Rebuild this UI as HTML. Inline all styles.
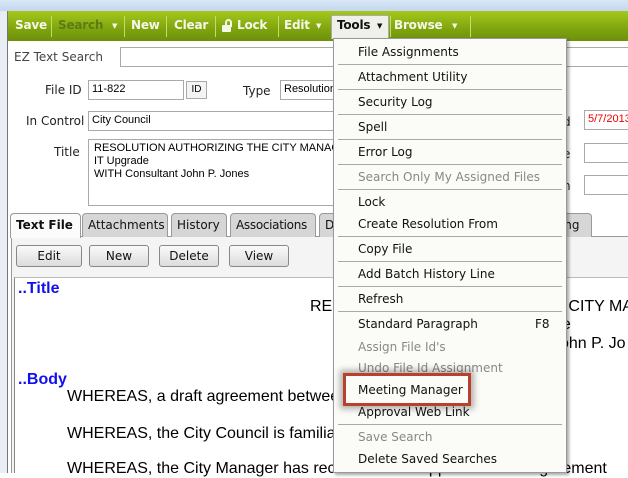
<!DOCTYPE html>
<html><head><meta charset="utf-8"><style>
*{margin:0;padding:0;box-sizing:border-box}
body{width:628px;height:473px;overflow:hidden;position:relative;background:#fff;font-family:"DejaVu Sans","Liberation Sans",sans-serif;}
.a{position:absolute;white-space:nowrap}
.tb{position:absolute;left:8px;top:11px;width:620px;height:30px;background:linear-gradient(#a5c81c,#7fa40f 60%,#6d900a);}
.tb span{position:absolute;top:7px;font-size:12px;font-weight:bold;color:#f4f8e8;letter-spacing:-0.2px;white-space:nowrap}
.tb .ar{font-size:7px;top:11px}
.sep{position:absolute;top:5px;width:1px;height:21px;background:#c4dc6a}
.lbl{font-size:12px;color:#222}
.in{position:absolute;border:1px solid #aaa;background:#fff;font-family:"Liberation Sans",sans-serif;font-size:11px;padding:2px 3px;color:#000;white-space:nowrap;overflow:hidden}
.tab{position:absolute;top:213px;height:24px;border:1px solid #999;border-bottom:none;border-radius:4px 4px 0 0;background:#d6d6d6;font-size:12px;padding:4px 5px;color:#111;white-space:nowrap;overflow:hidden}
.btn{position:absolute;top:245px;height:22px;border:1px solid #888;border-radius:3px;background:linear-gradient(#fafafa,#dcdcdc);font-size:12px;text-align:center;line-height:20px;color:#111}
.menu{position:absolute;left:333px;top:38px;width:234px;height:435px;background:#fbfbf7;border:1px solid #999;box-shadow:2px 2px 3px rgba(0,0,0,.35)}
.mi{position:absolute;left:24px;font-size:12px;color:#111;white-space:nowrap}
.dis{color:#888}
.ms{position:absolute;left:4px;width:224px;height:1px;background:#a8a8a8}
.doc{font-family:"Liberation Sans",sans-serif;font-size:16px;color:#000}
</style></head><body>
<div class="a" style="left:0;top:0;width:628px;height:11px;background:linear-gradient(#d9e7f5,#c3d7ee)"></div>
<div class="a" style="left:0;top:11px;width:8px;height:462px;background:#e9eef5;border-right:1px solid #777"></div>
<div class="tb">
<span style="left:7px">Save</span><div class="sep" style="left:43px"></div>
<span style="left:50px;color:#5e7a14">Search</span><span class="ar" style="left:104px">▼</span><div class="sep" style="left:116px"></div>
<span style="left:123px">New</span><div class="sep" style="left:158px"></div>
<span style="left:166px">Clear</span><div class="sep" style="left:207px"></div>
<div style="position:absolute;left:214px;top:14px;width:9px;height:7px;background:#f4f8e8;border-radius:1px"></div>
<div style="position:absolute;left:217px;top:8px;width:7px;height:8px;border:2px solid #f4f8e8;border-bottom:none;border-radius:4px 4px 0 0"></div>
<span style="left:229px">Lock</span><div class="sep" style="left:270px"></div>
<span style="left:276px">Edit</span><span class="ar" style="left:308px">▼</span>
<div style="position:absolute;left:323px;top:4px;width:58px;height:24px;background:#f0f0ea;border:1px solid #aaa;border-bottom:none"></div>
<span style="left:329px;color:#111">Tools</span><span class="ar" style="left:369px;color:#111">▼</span><div class="sep" style="left:382px"></div>
<span style="left:386px">Browse</span><span class="ar" style="left:444px">▼</span><div class="sep" style="left:462px"></div>
</div>
<div class="a lbl" style="left:14px;top:50px;color:#444">EZ Text Search</div>
<div class="in" style="left:120px;top:47px;width:520px;height:20px"></div>
<div class="a lbl" style="left:45px;top:83px">File ID</div>
<div class="in" style="left:88px;top:80px;width:96px;height:20px">11-822</div>
<div class="in" style="left:186px;top:81px;width:21px;height:18px;background:#f4f4f4;font-size:10px;text-align:center;padding:2px 0">ID</div>
<div class="a lbl" style="left:243px;top:84px">Type</div>
<div class="in" style="left:280px;top:80px;width:120px;height:20px">Resolution</div>
<div class="a lbl" style="left:26px;top:114px">In Control</div>
<div class="in" style="left:88px;top:111px;width:300px;height:20px">City Council</div>
<div class="a lbl" style="left:54px;top:145px">Title</div>
<div class="in" style="left:88px;top:139px;width:300px;height:67px;line-height:13px;padding:2px 5px">RESOLUTION AUTHORIZING THE CITY MANAGER<br>IT Upgrade<br>WITH Consultant John P. Jones</div>
<div class="a lbl" style="left:563px;top:115px">d</div>
<div class="in" style="left:584px;top:110px;width:50px;height:20px;color:#e00">5/7/2013</div>
<div class="a lbl" style="left:563px;top:147px">e</div>
<div class="in" style="left:584px;top:143px;width:50px;height:20px"></div>
<div class="a lbl" style="left:563px;top:179px">n</div>
<div class="in" style="left:584px;top:175px;width:50px;height:20px"></div>
<div class="a" style="left:11px;top:236px;width:617px;height:237px;background:#f4f4f4;border-left:1px solid #999;border-top:1px solid #999"></div>
<div class="tab" style="left:10px;width:71px;background:#fbfbfb;height:25px;font-weight:bold">Text File</div>
<div class="tab" style="left:82px;width:86px">Attachments</div>
<div class="tab" style="left:171px;width:56px">History</div>
<div class="tab" style="left:230px;width:86px;letter-spacing:-0.3px">Associations</div>
<div class="tab" style="left:319px;width:30px">D</div>
<div class="tab" style="left:540px;width:52px;padding-left:13px">king</div>
<div class="btn" style="left:16px;width:66px">Edit</div>
<div class="btn" style="left:89px;width:60px">New</div>
<div class="btn" style="left:159px;width:60px">Delete</div>
<div class="btn" style="left:229px;width:60px">View</div>
<div class="a" style="left:14px;top:277px;width:614px;height:196px;background:#fff;border-left:1px solid #888;border-top:1px solid #bbb"></div>
<div class="a doc" style="left:18px;top:280px;color:#1010f0;font-weight:bold">..Title</div>
<div class="a doc" style="left:310px;top:298px">RESOLUTION AUTHORIZING THE CITY MAN</div>
<div class="a doc" style="left:553px;top:316px">de</div>
<div class="a doc" style="left:560px;top:335px">ohn P. Jo</div>
<div class="a doc" style="left:18px;top:371px;color:#1010f0;font-weight:bold">..Body</div>
<div class="a doc" style="left:67px;top:388px">WHEREAS, a draft agreement between the City and John Jones has</div>
<div class="a doc" style="left:67px;top:425px">WHEREAS, the City Council is familiar</div>
<div class="a doc" style="left:67px;top:460px">WHEREAS, the City Manager has recommended approval of the agreement</div>
<div class="menu">
<div class="mi" style="top:6px">File Assignments</div><div class="ms" style="top:25px"></div>
<div class="mi" style="top:31px">Attachment Utility</div><div class="ms" style="top:50px"></div>
<div class="mi" style="top:56px">Security Log</div><div class="ms" style="top:75px"></div>
<div class="mi" style="top:81px">Spell</div><div class="ms" style="top:100px"></div>
<div class="mi" style="top:106px">Error Log</div><div class="ms" style="top:125px"></div>
<div class="mi dis" style="top:131px">Search Only My Assigned Files</div><div class="ms" style="top:150px"></div>
<div class="mi" style="top:156px">Lock</div>
<div class="mi" style="top:178px">Create Resolution From</div><div class="ms" style="top:197px"></div>
<div class="mi" style="top:203px">Copy File</div><div class="ms" style="top:222px"></div>
<div class="mi" style="top:228px">Add Batch History Line</div><div class="ms" style="top:247px"></div>
<div class="mi" style="top:253px">Refresh</div><div class="ms" style="top:272px"></div>
<div class="mi" style="top:278px">Standard Paragraph</div><div class="mi" style="top:278px;left:201px">F8</div>
<div class="mi dis" style="top:301px">Assign File Id's</div>
<div class="mi dis" style="top:322px">Undo File Id Assignment</div>
<div style="position:absolute;left:9px;top:334px;width:128px;height:33px;border:3px solid #b9412c;box-shadow:0 0 6px 3px rgba(0,0,0,.3)"></div>
<div class="mi" style="top:344px">Meeting Manager</div>
<div class="mi" style="top:366px">Approval Web Link</div><div class="ms" style="top:385px"></div>
<div class="mi dis" style="top:391px">Save Search</div>
<div class="mi" style="top:413px">Delete Saved Searches</div>
</div>
</body></html>
